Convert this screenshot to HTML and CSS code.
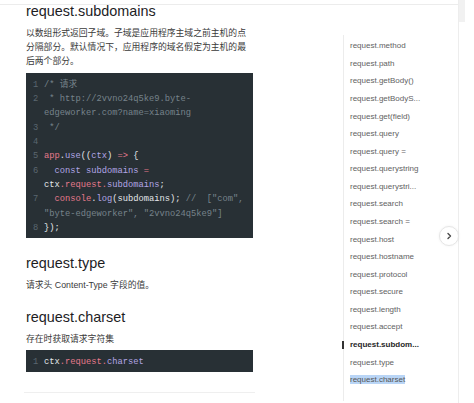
FILE: index.html
```html
<!DOCTYPE html>
<html lang="zh-CN">
<head>
<meta charset="utf-8">
<title>request.subdomains</title>
<link rel="stylesheet" href="styles.css">
</head>
<body>
<div class="topbar"></div>
<div class="scroll-thumb"></div>
<div class="layout">
  <main class="doc">
    <h2 class="doc-title first">request.subdomains</h2>
    <p class="doc-text">以数组形式返回子域。子域是应用程序主域之前主机的点分隔部分。默认情况下，应用程序的域名假定为主机的最后两个部分。</p>
    <div class="code">
      <div class="ln">1</div><div class="cl"><span class="cm">/* 请求</span></div>
      <div class="ln">2</div><div class="cl"><span class="cm"> * http://2vvno24q5ke9.byte-</span><span class="cm">edgeworker.com?name=xiaoming</span></div>
      <div class="ln">3</div><div class="cl"><span class="cm"> */</span></div>
      <div class="ln">4</div><div class="cl"> </div>
      <div class="ln">5</div><div class="cl"><span class="pk">app</span><span class="tx">.</span><span class="lv">use</span><span class="tx">((</span><span class="lv">ctx</span><span class="tx">) </span><span class="pk">=&gt;</span><span class="tx"> {</span></div>
      <div class="ln">6</div><div class="cl"><span class="tx">  </span><span class="lv">const</span><span class="tx"> </span><span class="lv">subdomains</span><span class="tx"> </span><span class="pk">=</span><span class="tx"> </span><span class="tx">ctx</span><span class="pk">.request.</span><span class="lv">subdomains</span><span class="tx">;</span></div>
      <div class="ln">7</div><div class="cl"><span class="tx">  </span><span class="pk">console</span><span class="tx">.</span><span class="lv">log</span><span class="tx">(subdomains); </span><span class="cm">//  ["com", </span><span class="cm">"byte-edgeworker", "2vvno24q5ke9"]</span></div>
      <div class="ln">8</div><div class="cl"><span class="tx">});</span></div>
    </div>

    <h2 class="doc-title">request.type</h2>
    <p class="doc-text">请求头 Content-Type 字段的值。</p>

    <h2 class="doc-title">request.charset</h2>
    <p class="doc-text">存在时获取请求字符集</p>
    <div class="code">
      <div class="ln">1</div><div class="cl"><span class="tx">ctx</span><span class="pk">.request.</span><span class="lv">charset</span></div>
    </div>
    <hr class="doc-rule">
  </main>

  <aside class="side">
    <ul class="toc">
      <li class="toc-item">request.method</li>
      <li class="toc-item">request.path</li>
      <li class="toc-item">request.getBody()</li>
      <li class="toc-item">request.getBodyS...</li>
      <li class="toc-item">request.get(field)</li>
      <li class="toc-item">request.query</li>
      <li class="toc-item">request.query =</li>
      <li class="toc-item">request.querystring</li>
      <li class="toc-item">request.querystri...</li>
      <li class="toc-item">request.search</li>
      <li class="toc-item">request.search =</li>
      <li class="toc-item">request.host</li>
      <li class="toc-item">request.hostname</li>
      <li class="toc-item">request.protocol</li>
      <li class="toc-item">request.secure</li>
      <li class="toc-item">request.length</li>
      <li class="toc-item">request.accept</li>
      <li class="toc-item active">request.subdom...</li>
      <li class="toc-item">request.type</li>
      <li class="toc-item"><span class="sel">request.charset</span></li>
    </ul>
    <button class="collapse" type="button" aria-label="collapse">
      <svg width="8" height="8" viewBox="0 0 8 8"><path d="M3 1.5 L5.5 4 L3 6.5" fill="none" stroke="#4a4a4a" stroke-width="1.4" stroke-linecap="round" stroke-linejoin="round"/></svg>
    </button>
  </aside>
</div>
</body>
</html>
```

FILE: styles.css
```css
html, body {
  margin: 0;
  padding: 0;
  background: #ffffff;
}
body {
  width: 474px;
  height: 403px;
  overflow: hidden;
  position: relative;
  font-family: "Liberation Sans", "Noto Sans CJK SC", sans-serif;
  color: #333;
}
.topbar {
  position: absolute;
  top: 0;
  left: 0;
  width: 458px;
  height: 4px;
  background: #fff;
  border-bottom: 1px solid #ececec;
  z-index: 2;
}
.scroll-thumb {
  position: absolute;
  top: 0;
  left: 459px;
  width: 6px;
  height: 22px;
  background: #f1f1f1;
  z-index: 2;
}
.layout {
  display: flex;
  align-items: stretch;
  height: 403px;
}
.doc {
  flex: 0 0 227px;
  width: 227px;
  padding: 1px 0 0 26px;
}
.doc-title {
  margin: 15px 0 5px;
  font-size: 14.4px;
  line-height: 20px;
  font-weight: 400;
  color: #1d1d1f;
}
.doc-title.first {
  margin-top: 0;
}
.doc-text {
  margin: 0 0 4px;
  font-size: 8.8px;
  line-height: 14.2px;
  color: #3a3a3a;
}
.code {
  display: grid;
  grid-template-columns: 18px 1fr;
  padding: 5px 7px 2.3px 0;
  background: #283035;
  font-family: "Liberation Mono", "Noto Sans CJK SC", monospace;
  font-size: 8.75px;
  line-height: 14.33px;
  color: #e4e7ea;
}
.ln {
  padding-left: 7px;
  color: #5b6770;
}
.cl {
  white-space: pre-wrap;
  min-height: 14.33px;
}
.tx { color: #e4e7ea; }
.cm { color: #77838b; }
.pk { color: #e67a8c; }
.lv { color: #b3a6e6; }
.doc-rule {
  margin: 20px -2px 0;
  border: 0;
  border-top: 1px solid #efefef;
  height: 0;
}
.side {
  position: relative;
  flex: 0 0 205px;
  border-right: 1px solid #ededed;
}
.toc {
  list-style: none;
  margin: 35px 0 0 90px;
  padding: 2.2px 0 12px 6px;
  border-left: 1px solid #ececec;
}
.toc-item {
  position: relative;
  font-size: 8px;
  line-height: 17.58px;
  height: 17.58px;
  color: #626262;
  white-space: nowrap;
}
.toc-item.active {
  font-weight: 700;
  color: #262626;
}
.toc-item.active::before {
  content: "";
  position: absolute;
  left: -8px;
  top: 4.8px;
  width: 2px;
  height: 8px;
  background: #333;
}
.sel {
  background: #b9d5f6;
  color: #555;
}
.collapse {
  position: absolute;
  left: 186px;
  top: 226px;
  width: 20px;
  height: 20px;
  padding: 0;
  border: 1px solid #e6e6e6;
  border-radius: 50%;
  background: #fff;
  box-shadow: 0 0 3px rgba(0,0,0,0.06);
  display: flex;
  align-items: center;
  justify-content: center;
}
.collapse svg {
  display: block;
}
```
